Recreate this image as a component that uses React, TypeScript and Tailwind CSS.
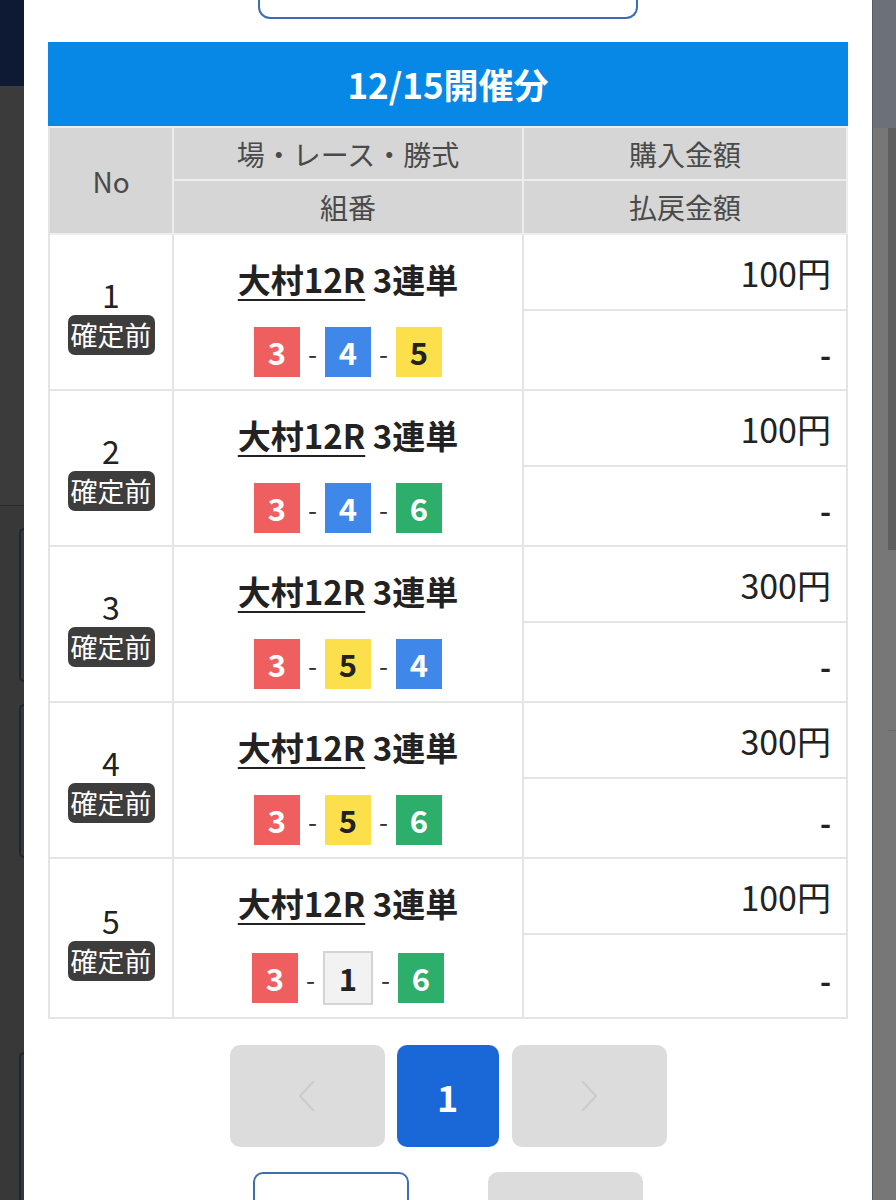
import React from "react";

type Row = { no: number; amount: string; nums: number[] };

const rows: Row[] = [
    { no: 1, amount: "100円", nums: [3, 4, 5] },
    { no: 2, amount: "100円", nums: [3, 4, 6] },
    { no: 3, amount: "300円", nums: [3, 5, 4] },
    { no: 4, amount: "300円", nums: [3, 5, 6] },
    { no: 5, amount: "100円", nums: [3, 1, 6] },
];

const boatStyle: Record<number, string> = {
    1: "w-[50px] h-[54px] border-2 border-[#d4d4d4] bg-[#f2f2f2] text-[#222]",
    2: "w-[46px] h-[50px] bg-[#333333] text-white",
    3: "w-[46px] h-[50px] bg-[#ef5f5f] text-white",
    4: "w-[46px] h-[50px] bg-[#3f88e9] text-white",
    5: "w-[46px] h-[50px] bg-[#fbe04c] text-[#222]",
    6: "w-[46px] h-[50px] bg-[#2dae6a] text-white",
};

export default function App() {
    return (
        <div className="flex h-[1200px] w-[896px] overflow-hidden font-['Noto_Sans_CJK_JP',sans-serif]">
            {/* Backdrop, left */}
            <div className="flex w-[24px] shrink-0 flex-col">
                <div className="h-[86px] shrink-0 bg-[#0e1a33]" />
                <div className="h-[419px] shrink-0 bg-[#3b3b3b]" />
                <div className="flex-1 border-t border-[#2a2a2a] bg-[#383838] pl-[19px] pt-[22px]">
                    <div className="h-[154px] rounded-l-[8px] border-y-2 border-l-2 border-[#1f2535]" />
                    <div className="mt-[22px] h-[154px] rounded-l-[8px] border-y-2 border-l-2 border-[#1f2535]" />
                    <div className="mt-[194px] h-[200px] rounded-tl-[8px] border-l-2 border-t-2 border-[#1f2535]" />
                </div>
            </div>

            {/* Modal */}
            <div className="w-[848px] shrink-0 bg-white px-[24px]">
                <div className="mx-auto h-[19px] w-[380px] rounded-b-[12px] border-2 border-t-0 border-[#3e6db0]" />

                {/* Title */}
                <div className="mt-[23px] flex h-[84px] items-center justify-center bg-[#0787e6] text-[35px] font-bold text-white">
                    12/15開催分
                </div>

                {/* Table */}
                <div className="border-l-2 border-[#e4e4e4]">
                    {/* Head */}
                    <div className="flex border-y-2 border-[#ededed] bg-[#d6d6d6] text-[28px] text-[#4a4a4a]">
                        <div className="flex w-[124px] items-center justify-center border-r-2 border-[#ededed]">
                            No
                        </div>
                        <div className="flex w-[350px] flex-col border-r-2 border-[#ededed]">
                            <div className="flex h-[53px] items-center justify-center border-b-2 border-[#ededed]">
                                場・レース・勝式
                            </div>
                            <div className="flex h-[52px] items-center justify-center">組番</div>
                        </div>
                        <div className="flex w-[324px] flex-col border-r-2 border-[#ededed]">
                            <div className="flex h-[53px] items-center justify-center border-b-2 border-[#ededed]">
                                購入金額
                            </div>
                            <div className="flex h-[52px] items-center justify-center">払戻金額</div>
                        </div>
                    </div>

                    {/* Body */}
                    {rows.map((r) => (
                        <div key={r.no} className="flex border-b-2 border-[#e4e4e4] text-[#222]">
                            <div className="flex w-[124px] flex-col items-center justify-center border-r-2 border-[#e4e4e4] pt-[4px]">
                                <span className="text-[32px] leading-[42px]">{r.no}</span>
                                <span className="rounded-[7px] bg-[#3d3d3d] px-[3px] text-[27px] leading-[40px] text-white">
                                    確定前
                                </span>
                            </div>
                            <div className="flex w-[350px] flex-col items-center border-r-2 border-[#e4e4e4] pb-[12px] pt-[20px]">
                                <p className="text-[33px] font-bold leading-[48px]">
                                    <span className="underline decoration-2 underline-offset-[6px]">大村12R</span> 3連単
                                </p>
                                <div className="mt-[24px] flex items-center">
                                    {r.nums.map((n, i) => (
                                        <React.Fragment key={i}>
                                            {i > 0 && (
                                                <span className="mx-[8px] w-[9px] text-center text-[26px] text-[#333]">-</span>
                                            )}
                                            <span
                                                className={`flex items-center justify-center text-[31px] font-bold ${boatStyle[n]}`}
                                            >
                                                {n}
                                            </span>
                                        </React.Fragment>
                                    ))}
                                </div>
                            </div>
                            <div className="flex w-[324px] flex-col border-r-2 border-[#e4e4e4]">
                                <div className="flex h-[76px] items-center justify-end border-b-2 border-[#e4e4e4] pr-[15px] text-[34px]">
                                    {r.amount}
                                </div>
                                <div className="flex flex-1 items-center justify-end pr-[15px] pt-[8px] text-[30px] font-bold">
                                    -
                                </div>
                            </div>
                        </div>
                    ))}
                </div>

                {/* Pager */}
                <div className="mt-[26px] flex justify-center">
                    <div className="flex h-[102px] w-[155px] items-center justify-center rounded-[10px] bg-[#dcdcdc]">
                        <svg width="20" height="34" viewBox="0 0 20 34" fill="none">
                            <path d="M17 2 3 17l14 15" stroke="#cbcbcb" strokeWidth="2" />
                        </svg>
                    </div>
                    <div className="ml-[12px] flex h-[102px] w-[102px] items-center justify-center rounded-[10px] bg-[#1a67d8] text-[36px] font-bold text-white">
                        1
                    </div>
                    <div className="ml-[13px] flex h-[102px] w-[155px] items-center justify-center rounded-[10px] bg-[#dcdcdc]">
                        <svg width="20" height="34" viewBox="0 0 20 34" fill="none">
                            <path d="M3 2l14 15L3 32" stroke="#cbcbcb" strokeWidth="2" />
                        </svg>
                    </div>
                </div>

                {/* Footer buttons */}
                <div className="mt-[25px] flex justify-center gap-[79px]">
                    <div className="h-[60px] w-[156px] rounded-[10px] border-2 border-[#3e6db0] bg-white" />
                    <div className="h-[60px] w-[155px] rounded-[10px] bg-[#dcdcdc]" />
                </div>
            </div>

            {/* Backdrop, right */}
            <div className="flex w-[24px] shrink-0 flex-col border-l border-[#555a60]">
                <div className="h-[128px] shrink-0 bg-[#6c7078]" />
                <div className="flex-1 bg-[#777777] pl-[15px]">
                    <div className="h-[422px] bg-[#5f5f5f]" />
                    <div className="mt-[180px] h-[1px] bg-[#6a6a6a]" />
                </div>
            </div>
        </div>
    );
}
